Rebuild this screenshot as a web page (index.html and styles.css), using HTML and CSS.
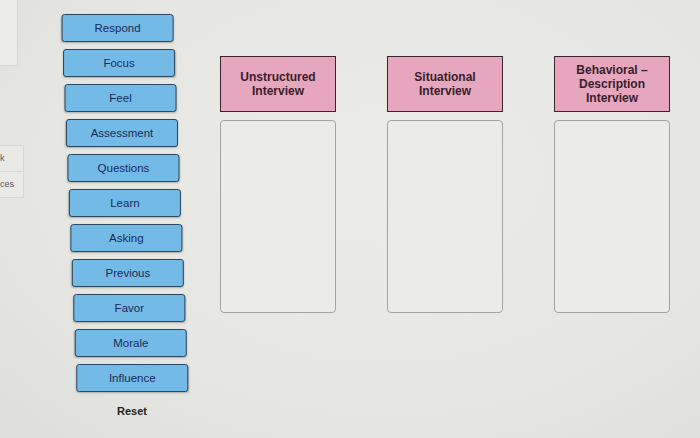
FILE: index.html
```html
<!DOCTYPE html>
<html>
<head>
<meta charset="utf-8">
<link rel="stylesheet" href="styles.css">
</head>
<body>
<div class="page">
  <aside class="side">
    <div class="side-top"></div>
    <div class="side-links">
      <div class="side-link">k</div>
      <div class="side-link">ces</div>
    </div>
  </aside>
  <div class="bank">
    <div class="tiles">
      <div class="tile">Respond</div>
      <div class="tile">Focus</div>
      <div class="tile">Feel</div>
      <div class="tile">Assessment</div>
      <div class="tile">Questions</div>
      <div class="tile">Learn</div>
      <div class="tile">Asking</div>
      <div class="tile">Previous</div>
      <div class="tile">Favor</div>
      <div class="tile">Morale</div>
      <div class="tile">Influence</div>
    </div>
    <div class="reset">Reset</div>
  </div>
  <div class="cols">
    <div class="col">
      <div class="head">Unstructured<br>Interview</div>
      <div class="drop"></div>
    </div>
    <div class="col">
      <div class="head">Situational<br>Interview</div>
      <div class="drop"></div>
    </div>
    <div class="col">
      <div class="head">Behavioral –<br>Description<br>Interview</div>
      <div class="drop"></div>
    </div>
  </div>
</div>
</body>
</html>
```
FILE: styles.css
```css
html, body {
  margin: 0;
  padding: 0;
}
body {
  width: 700px;
  height: 438px;
  overflow: hidden;
  background: radial-gradient(ellipse at 55% 40%, #ebebe8 0%, #e6e6e2 60%, #dedfda 100%);
  font-family: "Liberation Sans", Arial, sans-serif;
}
.page {
  display: flex;
  align-items: flex-start;
  height: 438px;
}
.side {
  width: 24px;
  flex: none;
  display: flex;
  flex-direction: column;
}
.side-top {
  width: 17px;
  height: 65px;
  background: #ececea;
  border-right: 1px solid #d6d6d2;
  border-bottom: 1px solid #d6d6d2;
}
.side-links {
  margin-top: 79px;
  width: 23px;
  border: 1px solid #d8d8d4;
  border-left: none;
  background: #e9e9e6;
}
.side-link {
  height: 25px;
  line-height: 25px;
  font-size: 9px;
  color: #555;
  white-space: nowrap;
}
.side-link + .side-link {
  border-top: 1px solid #d8d8d4;
}
.bank {
  margin-left: 37px;
  padding-top: 14px;
  width: 112px;
  flex: none;
  display: flex;
  flex-direction: column;
  align-items: stretch;
}
.tiles {
  display: flex;
  flex-direction: column;
  gap: 7px;
  transform: skewX(2.4deg);
  transform-origin: top left;
}
.tile {
  transform: skewX(-2.4deg);
  height: 26px;
  line-height: 26px;
  border: 1px solid #2c4860;
  border-radius: 3px;
  background: #73bae7;
  color: #1a2a58;
  font-size: 11.5px;
  text-align: center;
  box-shadow: 0 1px 2px rgba(0,0,0,0.25);
}
.reset {
  margin-top: 13px;
  margin-left: 30px;
  text-align: center;
  font-size: 11px;
  font-weight: bold;
  color: #222;
}
.cols {
  margin-left: 47px;
  padding-top: 56px;
  display: flex;
  gap: 51px;
}
.col {
  width: 116px;
  display: flex;
  flex-direction: column;
  gap: 8px;
}
.head {
  height: 54px;
  border: 1px solid #3a2430;
  background: #e6a6bd;
  color: #3a1d2c;
  font-size: 12px;
  font-weight: bold;
  line-height: 14px;
  text-align: center;
  display: flex;
  align-items: center;
  justify-content: center;
}
.drop {
  height: 191px;
  border: 1px solid #a3a3a0;
  border-radius: 4px;
  background: #ebebe8;
}
```
